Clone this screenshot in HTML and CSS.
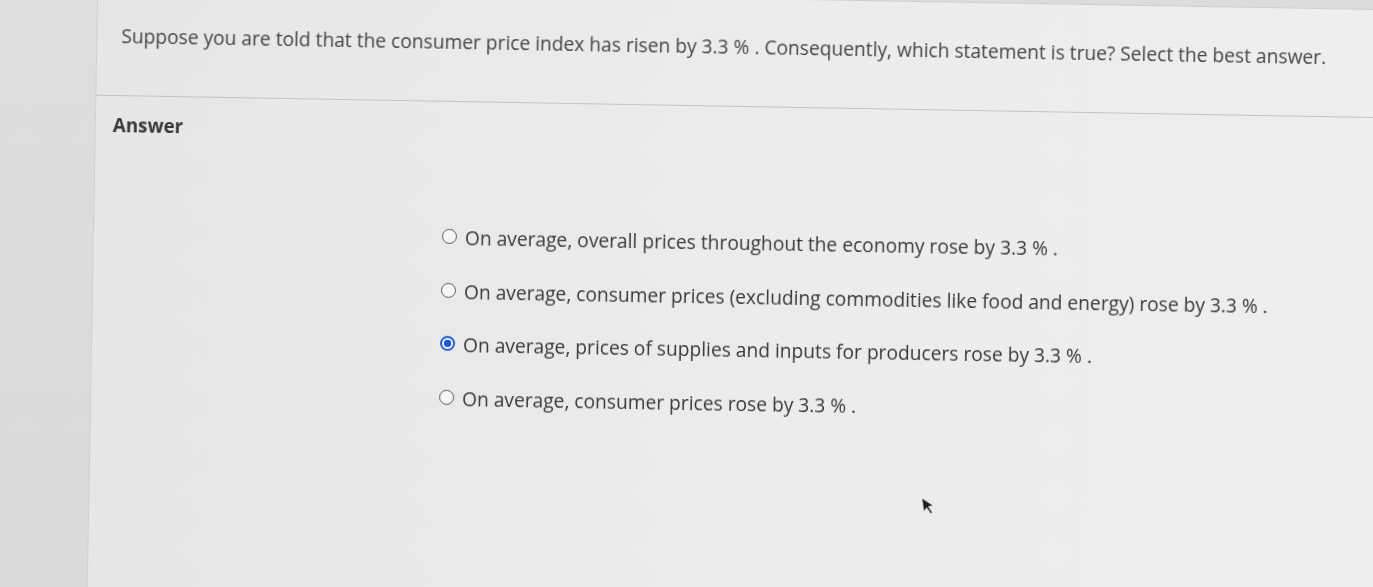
FILE: index.html
```html
<!DOCTYPE html>
<html lang="en">
<head>
<meta charset="utf-8">
<title>Question</title>
<link rel="stylesheet" href="styles.css">
</head>
<body>
<div class="stage">
  <aside class="sidebar"></aside>
  <main class="panel">
    <section class="question">
      <p class="question-text">Suppose you are told that the consumer price index has risen by 3.3 % . Consequently, which statement is true? Select the best answer.</p>
    </section>
    <section class="answer">
      <h2 class="answer-label">Answer</h2>
      <ul class="options">
        <li class="option"><span class="radio"></span><span class="option-text">On average, overall prices throughout the economy rose by 3.3 % .</span></li>
        <li class="option"><span class="radio"></span><span class="option-text">On average, consumer prices (excluding commodities like food and energy) rose by 3.3 % .</span></li>
        <li class="option"><span class="radio checked"></span><span class="option-text">On average, prices of supplies and inputs for producers rose by 3.3 % .</span></li>
        <li class="option"><span class="radio"></span><span class="option-text">On average, consumer prices rose by 3.3 % .</span></li>
      </ul>
    </section>
  </main>
</div>
<svg class="cursor" width="14" height="20" viewBox="0 0 14 20" aria-hidden="true">
  <path d="M1 1 L1 15 L4.5 11.5 L7.5 18 L9.5 17 L6.6 10.6 L11.5 10.6 Z" fill="#1c1c1c" stroke="#f4f4f2" stroke-width="0.8"/>
</svg>
</body>
</html>
```

FILE: styles.css
```css
html, body {
  margin: 0;
  padding: 0;
  height: 100%;
  overflow: hidden;
  background: #dcdcda;
}

.stage {
  width: 1520px;
  height: 720px;
  margin-top: -40px;
  transform-origin: 0 40px;
  transform: rotate(1deg);
  display: flex;
  font-family: "Open Sans", "Noto Sans", sans-serif;
  filter: blur(0.3px);
}

.sidebar {
  width: 97px;
  flex: none;
  background: linear-gradient(180deg, #dededc 0%, #d9d9d7 100%);
  border-right: 1px solid #d0d0ce;
}

.panel {
  flex: 1;
  margin-top: 25px;
  border-top: 1px solid #cfcfcd;
  background: linear-gradient(90deg, #e6e6e4 0%, #ebebe9 40%, #efefed 100%);
}

.question {
  padding: 34px 24px 46px 24px;
  border-bottom: 1px solid #c4c4c2;
}

.question-text {
  margin: 0;
  font-size: 19.2px;
  line-height: 27px;
  color: #454545;
}

.answer {
  padding: 16px 17px 0 17px;
}

.answer-label {
  margin: 0;
  font-size: 18.8px;
  line-height: 26px;
  font-weight: 700;
  color: #383838;
}

.options {
  list-style: none;
  margin: 81px 0 0 331px;
  padding: 0;
  display: flex;
  flex-direction: column;
  gap: 27.5px;
}

.option {
  display: flex;
  align-items: center;
  gap: 8px;
  line-height: 26px;
  font-size: 19.2px;
  color: #3a3a3a;
}

.radio {
  width: 15px;
  height: 15px;
  box-sizing: border-box;
  border: 1.8px solid #585858;
  border-radius: 50%;
  background: #f6f6f4;
  flex: none;
  margin-top: -3px;
}

.radio.checked {
  border: 2px solid #1f5fd8;
  background: radial-gradient(circle, #1a56cc 0 3.4px, #f6f6f4 4px);
}

.cursor {
  position: fixed;
  left: 922px;
  top: 496px;
  transform: rotate(-8deg);
}
```
